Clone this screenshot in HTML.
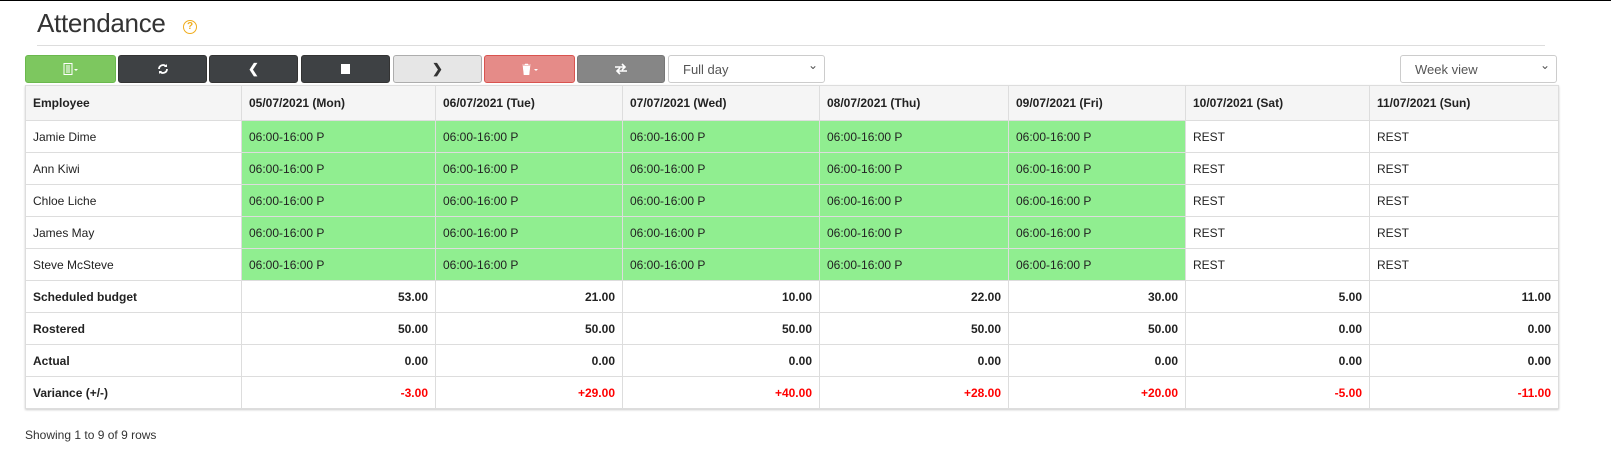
<!DOCTYPE html>
<html><head><style>
body{margin:0;width:1611px;height:453px;background:#fff;font-family:"Liberation Sans",Arial,sans-serif;color:#333;position:relative;overflow:hidden}
.topline{position:absolute;left:0;top:0;width:1611px;height:1px;background:#000}
h1{position:absolute;left:37px;top:8px;margin:0;font-weight:normal;font-size:26px;color:#333;letter-spacing:-0.3px}
.help{position:absolute;left:183px;top:20px;width:12px;height:12px;border:1.5px solid #f0ad1e;border-radius:50%;color:#f0ad1e;font-size:10px;font-weight:bold;text-align:center;line-height:12px}
.hr{position:absolute;left:37px;top:45px;width:1508px;height:1px;background:#ddd}
.btn{position:absolute;top:55px;height:28px;border-radius:3px;color:#fff;display:flex;align-items:center;justify-content:center;font-size:13px;font-weight:bold;box-sizing:border-box}
.dk{background:#3e4144;border:1px solid #333}
.sel{position:absolute;top:55px;height:28px;border:1px solid #ccc;border-radius:3px;box-sizing:border-box;font-size:13px;color:#555;padding:6px 14px;background:#fff}
.sel:after{content:"⌄";position:absolute;right:6px;top:2px;font-size:12px;color:#555}
table{position:absolute;left:25px;top:85px;border-collapse:collapse;font-size:12px;border:1px solid #ddd;box-shadow:0 1px 2px #ccc}
td,th{border:1px solid #ddd;padding:0 7px;height:31px;text-align:left;color:#222}
th{background:#f5f5f5;height:34px;font-weight:bold}
.g{background:#90ee90}
.b{font-weight:bold}
.r{text-align:right;font-weight:bold}
.red{color:#f00}
.foot{position:absolute;left:25px;top:428px;font-size:12px;color:#333}
</style></head><body>
<div class="topline"></div>
<h1>Attendance</h1><div class="help">?</div>
<div class="hr"></div>
<div class="btn" style="left:25px;width:91px;background:#7dc75f;border:1px solid #6ab84d">
<svg width="16" height="12" viewBox="0 0 16 12"><rect x="1" y="0.5" width="8" height="11" fill="none" stroke="#fff"/><path d="M3 3h4M3 5h4M3 7h4M3 9h4" stroke="#fff"/><path d="M11 6l2 2 2-2z" fill="#fff"/></svg></div>
<div class="btn dk" style="left:118px;width:89px"><svg width="12" height="12" viewBox="0 0 12 12"><path d="M2 6a4 4 0 0 1 7-2.6M10 6a4 4 0 0 1-7 2.6" stroke="#fff" stroke-width="1.8" fill="none"/><path d="M10 1v3H7zM2 11V8h3z" fill="#fff"/></svg></div>
<div class="btn dk" style="left:209px;width:89px">❮</div>
<div class="btn dk" style="left:301px;width:89px"><span style="display:block;width:9px;height:10px;background:#fff"></span></div>
<div class="btn" style="left:393px;width:89px;background:#e6e6e6;border:1px solid #adadad;color:#333">❯</div>
<div class="btn" style="left:484px;width:91px;background:#e58b88;border:1px solid #d9534f"><svg width="20" height="12" viewBox="0 0 20 12"><path d="M2 2h9M5 2V1h3v1M3 3h7l-1 9H4z" fill="#fff" stroke="#fff" stroke-width=".5"/><path d="M14 6l2 2 2-2z" fill="#fff"/></svg></div>
<div class="btn" style="left:577px;width:88px;background:#868686;border:1px solid #777"><svg width="14" height="12" viewBox="0 0 14 12"><path d="M1 4h10M8 1l3 3-3 3M13 8H3M6 5L3 8l3 3" stroke="#fff" stroke-width="1.6" fill="none"/></svg></div>
<div class="sel" style="left:668px;width:157px">Full day</div>
<div class="sel" style="left:1400px;width:157px">Week view</div>
<table>
<tr><th style="width:201px">Employee</th><th style="width:179px">05/07/2021 (Mon)</th><th style="width:172px">06/07/2021 (Tue)</th><th style="width:182px">07/07/2021 (Wed)</th><th style="width:174px">08/07/2021 (Thu)</th><th style="width:162px">09/07/2021 (Fri)</th><th style="width:169px">10/07/2021 (Sat)</th><th style="width:174px">11/07/2021 (Sun)</th></tr>
<tr><td>Jamie Dime</td><td class="g">06:00-16:00 P</td><td class="g">06:00-16:00 P</td><td class="g">06:00-16:00 P</td><td class="g">06:00-16:00 P</td><td class="g">06:00-16:00 P</td><td>REST</td><td>REST</td></tr>
<tr><td>Ann Kiwi</td><td class="g">06:00-16:00 P</td><td class="g">06:00-16:00 P</td><td class="g">06:00-16:00 P</td><td class="g">06:00-16:00 P</td><td class="g">06:00-16:00 P</td><td>REST</td><td>REST</td></tr>
<tr><td>Chloe Liche</td><td class="g">06:00-16:00 P</td><td class="g">06:00-16:00 P</td><td class="g">06:00-16:00 P</td><td class="g">06:00-16:00 P</td><td class="g">06:00-16:00 P</td><td>REST</td><td>REST</td></tr>
<tr><td>James May</td><td class="g">06:00-16:00 P</td><td class="g">06:00-16:00 P</td><td class="g">06:00-16:00 P</td><td class="g">06:00-16:00 P</td><td class="g">06:00-16:00 P</td><td>REST</td><td>REST</td></tr>
<tr><td>Steve McSteve</td><td class="g">06:00-16:00 P</td><td class="g">06:00-16:00 P</td><td class="g">06:00-16:00 P</td><td class="g">06:00-16:00 P</td><td class="g">06:00-16:00 P</td><td>REST</td><td>REST</td></tr>
<tr><td class="b">Scheduled budget</td><td class="r">53.00</td><td class="r">21.00</td><td class="r">10.00</td><td class="r">22.00</td><td class="r">30.00</td><td class="r">5.00</td><td class="r">11.00</td></tr>
<tr><td class="b">Rostered</td><td class="r">50.00</td><td class="r">50.00</td><td class="r">50.00</td><td class="r">50.00</td><td class="r">50.00</td><td class="r">0.00</td><td class="r">0.00</td></tr>
<tr><td class="b">Actual</td><td class="r">0.00</td><td class="r">0.00</td><td class="r">0.00</td><td class="r">0.00</td><td class="r">0.00</td><td class="r">0.00</td><td class="r">0.00</td></tr>
<tr><td class="b">Variance (+/-)</td><td class="r red">-3.00</td><td class="r red">+29.00</td><td class="r red">+40.00</td><td class="r red">+28.00</td><td class="r red">+20.00</td><td class="r red">-5.00</td><td class="r red">-11.00</td></tr>
</table>
<div class="foot">Showing 1 to 9 of 9 rows</div>
</body></html>
